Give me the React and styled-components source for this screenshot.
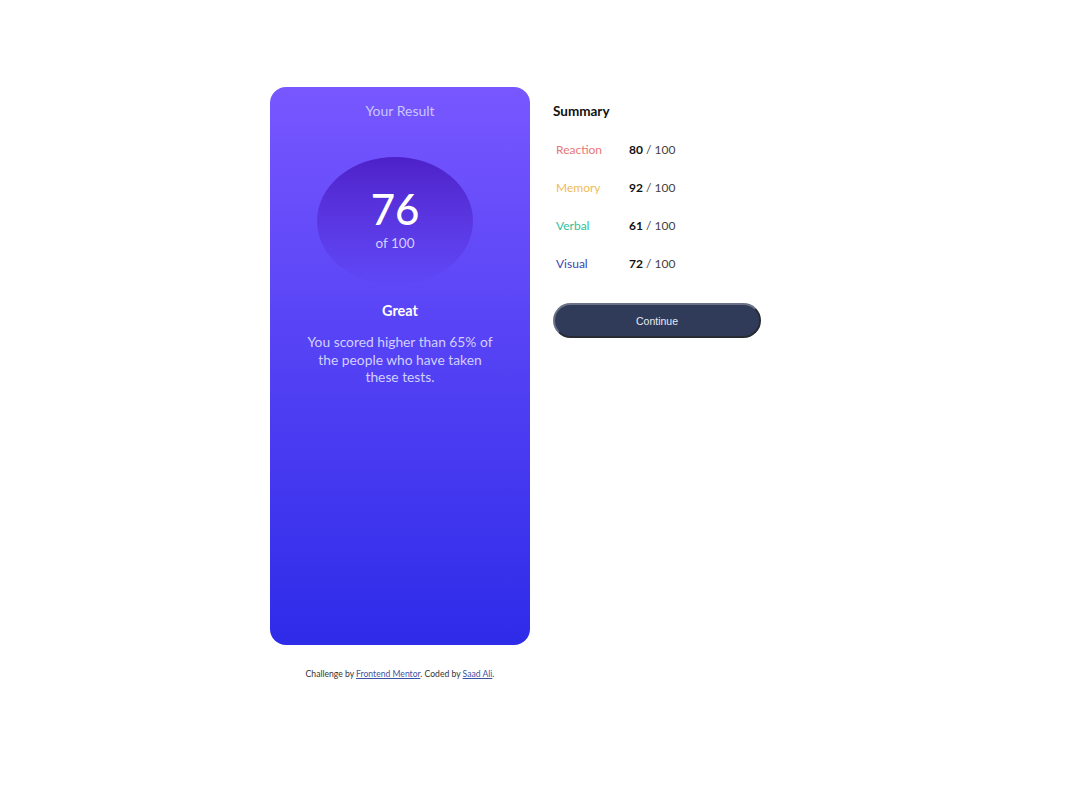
import styled, { createGlobalStyle } from 'styled-components'

const GlobalStyle = createGlobalStyle`
  body {
    margin: 0;
    background: #fff;
    font-family: Lato, "Noto Sans", sans-serif;
  }
`

const Page = styled.div`
  width: 540px;
  margin: 0 auto;
  padding-top: 87px;
`

const Main = styled.div`
  display: flex;
  gap: 23px;
`

const ResultCard = styled.div`
  width: 260px;
  height: 558px;
  box-sizing: border-box;
  padding-top: 14px;
  border-radius: 16px;
  background: linear-gradient(180deg, #7857ff 0%, #2e2be9 100%);
  display: flex;
  flex-direction: column;
  align-items: center;
  text-align: center;
`

const CardTitle = styled.div`
  font-size: 14px;
  line-height: 20px;
  color: #c8c7ff;
`

const ScoreCircle = styled.div`
  width: 156px;
  height: 128px;
  box-sizing: border-box;
  padding-bottom: 4px;
  margin: 36px 10px 0 0;
  border-radius: 50%;
  background: linear-gradient(180deg, #4d21c9 0%, rgba(37, 33, 201, 0) 100%);
  display: flex;
  flex-direction: column;
  align-items: center;
  justify-content: center;
`

const Score = styled.div`
  font-size: 42px;
  line-height: 44px;
  font-weight: 500;
  color: #fff;
`

const ScoreOf = styled.div`
  margin-top: 3px;
  font-size: 13.5px;
  line-height: 18px;
  color: #d2d0ff;
`

const Verdict = styled.div`
  margin-top: 16px;
  font-size: 14.5px;
  line-height: 20px;
  font-weight: 700;
  color: #fff;
`

const Blurb = styled.p`
  margin: 12px 0 0;
  max-width: 196px;
  font-size: 13.8px;
  line-height: 17.5px;
  color: #d2d0ff;
`

const Summary = styled.div`
  padding-top: 14px;
  width: 208px;
`

const SummaryTitle = styled.div`
  font-size: 13.5px;
  line-height: 20px;
  font-weight: 700;
  color: #111;
  margin-bottom: 9px;
`

const Row = styled.div`
  display: grid;
  grid-template-columns: 73px auto;
  align-items: center;
  height: 38px;
  padding-left: 3px;
  font-size: 12px;
`

const Label = styled.span`
  color: ${p => p.color};
`

const Value = styled.span`
  color: #444;
  b {
    color: #111;
    font-weight: 700;
  }
`

const ContinueBtn = styled.button`
  margin-top: 21px;
  width: 208px;
  height: 35px;
  border-radius: 18px;
  border: 2px outset #6b7288;
  background: #303b5a;
  color: #e8eaf2;
  font-family: "Liberation Sans", Arial, sans-serif;
  font-size: 10.5px;
  cursor: pointer;
`

const Attribution = styled.div`
  width: 260px;
  margin-top: 23px;
  text-align: center;
  font-size: 8.6px;
  line-height: 12px;
  color: #333;
  a {
    color: #3e52a3;
  }
`

const scores = [
  { label: 'Reaction', color: '#e87777', score: 80 },
  { label: 'Memory', color: '#efbb55', score: 92 },
  { label: 'Verbal', color: '#2fbf9c', score: 61 },
  { label: 'Visual', color: '#3b3fb4', score: 72 },
]

function App() {
  return (
    <>
      <GlobalStyle />
      <Page>
        <Main>
          <ResultCard>
            <CardTitle>Your Result</CardTitle>
            <ScoreCircle>
              <Score>76</Score>
              <ScoreOf>of 100</ScoreOf>
            </ScoreCircle>
            <Verdict>Great</Verdict>
            <Blurb>You scored higher than 65% of the people who have taken these tests.</Blurb>
          </ResultCard>
          <Summary>
            <SummaryTitle>Summary</SummaryTitle>
            {scores.map(s => (
              <Row key={s.label}>
                <Label color={s.color}>{s.label}</Label>
                <Value><b>{s.score}</b> / 100</Value>
              </Row>
            ))}
            <ContinueBtn>Continue</ContinueBtn>
          </Summary>
        </Main>
        <Attribution>
          Challenge by <a href="#">Frontend Mentor</a>. Coded by <a href="#">Saad Ali</a>.
        </Attribution>
      </Page>
    </>
  )
}

export default App
